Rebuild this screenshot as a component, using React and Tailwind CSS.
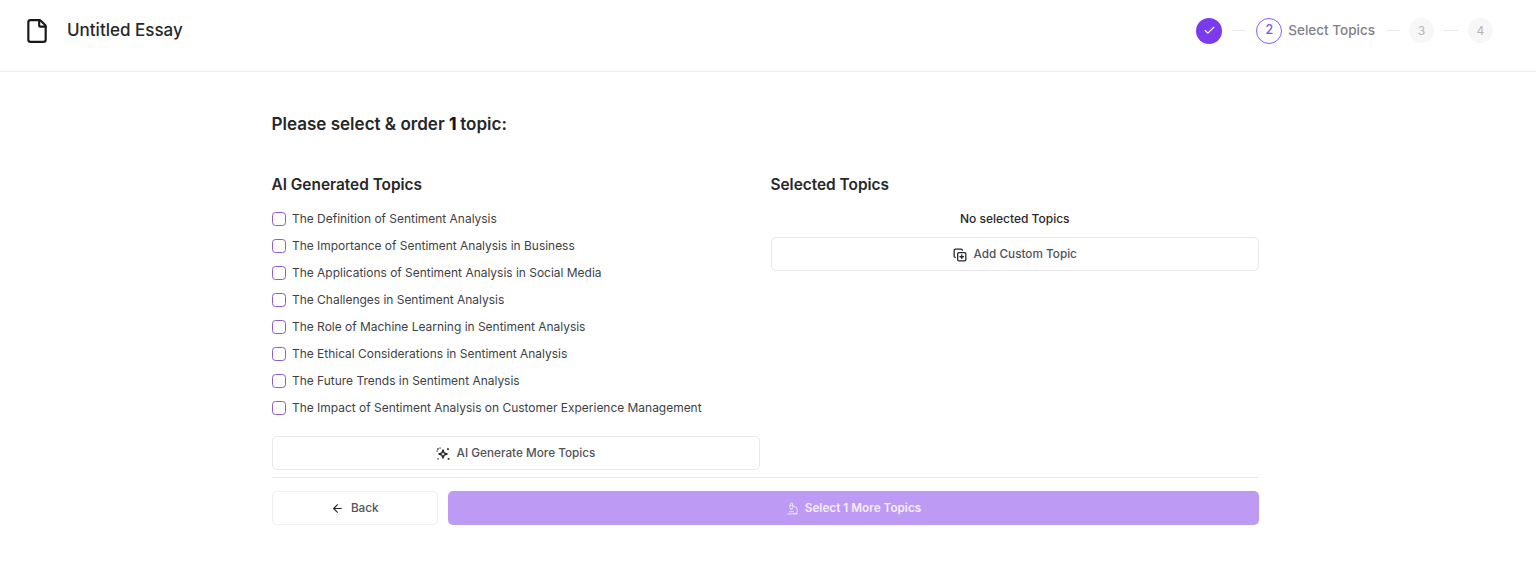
import { File, Check, ArrowLeft, Microscope } from "lucide-react";

const topics = [
  "The Definition of Sentiment Analysis",
  "The Importance of Sentiment Analysis in Business",
  "The Applications of Sentiment Analysis in Social Media",
  "The Challenges in Sentiment Analysis",
  "The Role of Machine Learning in Sentiment Analysis",
  "The Ethical Considerations in Sentiment Analysis",
  "The Future Trends in Sentiment Analysis",
  "The Impact of Sentiment Analysis on Customer Experience Management",
];

function CopyPlus({ className }) {
  return (
    <svg className={className} viewBox="0 0 24 24" fill="none" stroke="currentColor" strokeWidth="2.2" strokeLinecap="round" strokeLinejoin="round">
      <rect x="8" y="8" width="14" height="14" rx="2" />
      <path d="M4 16c-1.1 0-2-.9-2-2V4c0-1.1.9-2 2-2h10c1.1 0 2 .9 2 2" />
      <path d="M15 12v6M12 15h6" />
    </svg>
  );
}

function Sparkles({ className }) {
  return (
    <svg className={className} viewBox="0 0 24 24" fill="currentColor" stroke="none">
      <path d="M12 5l1.9 5.1L19 12l-5.1 1.9L12 19l-1.9-5.1L5 12l5.1-1.9z" fill="none" stroke="currentColor" strokeWidth="2.4" strokeLinejoin="round" />
      <path d="M2 2h2.6v2.6H2zM6 1h2v2H6zM1 6h2v2H1zM19 2h3v3h-3zM20 19h3v3h-3zM3 19l2 1-1 2-2-1z" />
    </svg>
  );
}

function Dash() {
  return <div className="w-[14px] h-px bg-[#e9e9ec]" />;
}

export default function App() {
  return (
    <div className="w-[1536px] h-[574px] bg-white overflow-hidden font-['Inter',sans-serif] text-[#27272a]">
      <header className="h-[72px] border-b border-[#eeeeef] flex items-center justify-between pl-[24px] pr-[43px] pb-[10px]">
        <div className="flex items-center pt-[1px]">
          <File className="w-[26px] h-[26px] text-[#18181b]" strokeWidth={2} />
          <span className="ml-[17px] text-[17px] font-medium text-[#27272a]">Untitled Essay</span>
        </div>
        <div className="flex items-center">
          <div className="w-[26px] h-[26px] rounded-full bg-[#7c3aed] flex items-center justify-center">
            <Check className="w-[13px] h-[13px] text-white" strokeWidth={2} />
          </div>
          <div className="ml-[10px]"><Dash /></div>
          <div className="ml-[10px] w-[26px] h-[26px] rounded-full border border-[#8b5cf6] flex items-center justify-center text-[12.5px] font-medium text-[#7c5ad6]">2</div>
          <span className="ml-[6px] text-[13.5px] font-medium text-[#80808a]">Select Topics</span>
          <div className="ml-[11px]"><Dash /></div>
          <div className="ml-[9px] w-[25px] h-[25px] rounded-full bg-[#f7f7f7] flex items-center justify-center text-[12px] text-[#b4b4b8]">3</div>
          <div className="ml-[10px]"><Dash /></div>
          <div className="ml-[10px] w-[25px] h-[25px] rounded-full bg-[#f7f7f7] flex items-center justify-center text-[12px] text-[#b4b4b8]">4</div>
        </div>
      </header>

      <main className="w-[987.5px] ml-[271.5px]">
        <h1 className="mt-[40px] h-[24px] leading-[24px] text-[17.05px] font-semibold text-[#27272a]">
          Please select &amp; order <span className="font-extrabold text-[#18181b] tracking-[-0.5px]">1</span> topic:
        </h1>
        <div className="mt-[37px] flex gap-[11px]">
          <section className="w-[488px]">
            <h2 className="h-[23px] leading-[23px] text-[15.4px] font-semibold text-[#27272a]">AI Generated Topics</h2>
            <ul className="mt-[9px] flex flex-col">
              {topics.map((t) => (
                <li key={t} className="h-[27px] flex items-center">
                  <span className="w-[14px] h-[14px] rounded-[3.5px] border border-[#8c5cc9] bg-white shrink-0" />
                  <span className="ml-[6.5px] text-[11.96px] leading-[20px] text-[#3f3f46]">{t}</span>
                </li>
              ))}
            </ul>
            <button className="mt-[15px] w-full h-[34px] pt-px rounded-[5px] border border-[#e8e8ea] bg-white flex items-center justify-center gap-[7px] text-[11.75px] font-medium text-[#52525b]">
              <Sparkles className="w-[14px] h-[14px] text-[#27272a]" />
              AI Generate More Topics
            </button>
          </section>
          <section className="flex-1 min-w-0">
            <h2 className="h-[23px] leading-[23px] text-[15.4px] font-semibold text-[#27272a]">Selected Topics</h2>
            <p className="mt-[13px] h-[20px] leading-[20px] text-center text-[12px] font-medium text-[#27272a]">No selected Topics</p>
            <button className="mt-[8px] w-full h-[34px] pt-px rounded-[5px] border border-[#e8e8ea] bg-white flex items-center justify-center gap-[7px] text-[11.75px] font-medium text-[#52525b]">
              <CopyPlus className="w-[14px] h-[14px] text-[#27272a]" />
              Add Custom Topic
            </button>
          </section>
        </div>
        <div className="mt-[7px] border-t border-[#e8e8ea] pt-[13px] flex gap-[10px]">
          <button className="w-[166.5px] h-[34px] pt-px rounded-[5px] border border-[#eeeeef] bg-white flex items-center justify-center gap-[7px] text-[11.75px] font-medium text-[#52525b]">
            <ArrowLeft className="w-[13px] h-[13px] text-[#27272a]" strokeWidth={2} />
            Back
          </button>
          <button className="flex-1 h-[34px] pt-px rounded-[5px] bg-[#bd9bf5] flex items-center justify-center gap-[6px] text-[11.75px] font-semibold text-[#f3ecfe]">
            <Microscope className="w-[13px] h-[13px]" strokeWidth={1.5} />
            Select 1 More Topics
          </button>
        </div>
      </main>
    </div>
  );
}
